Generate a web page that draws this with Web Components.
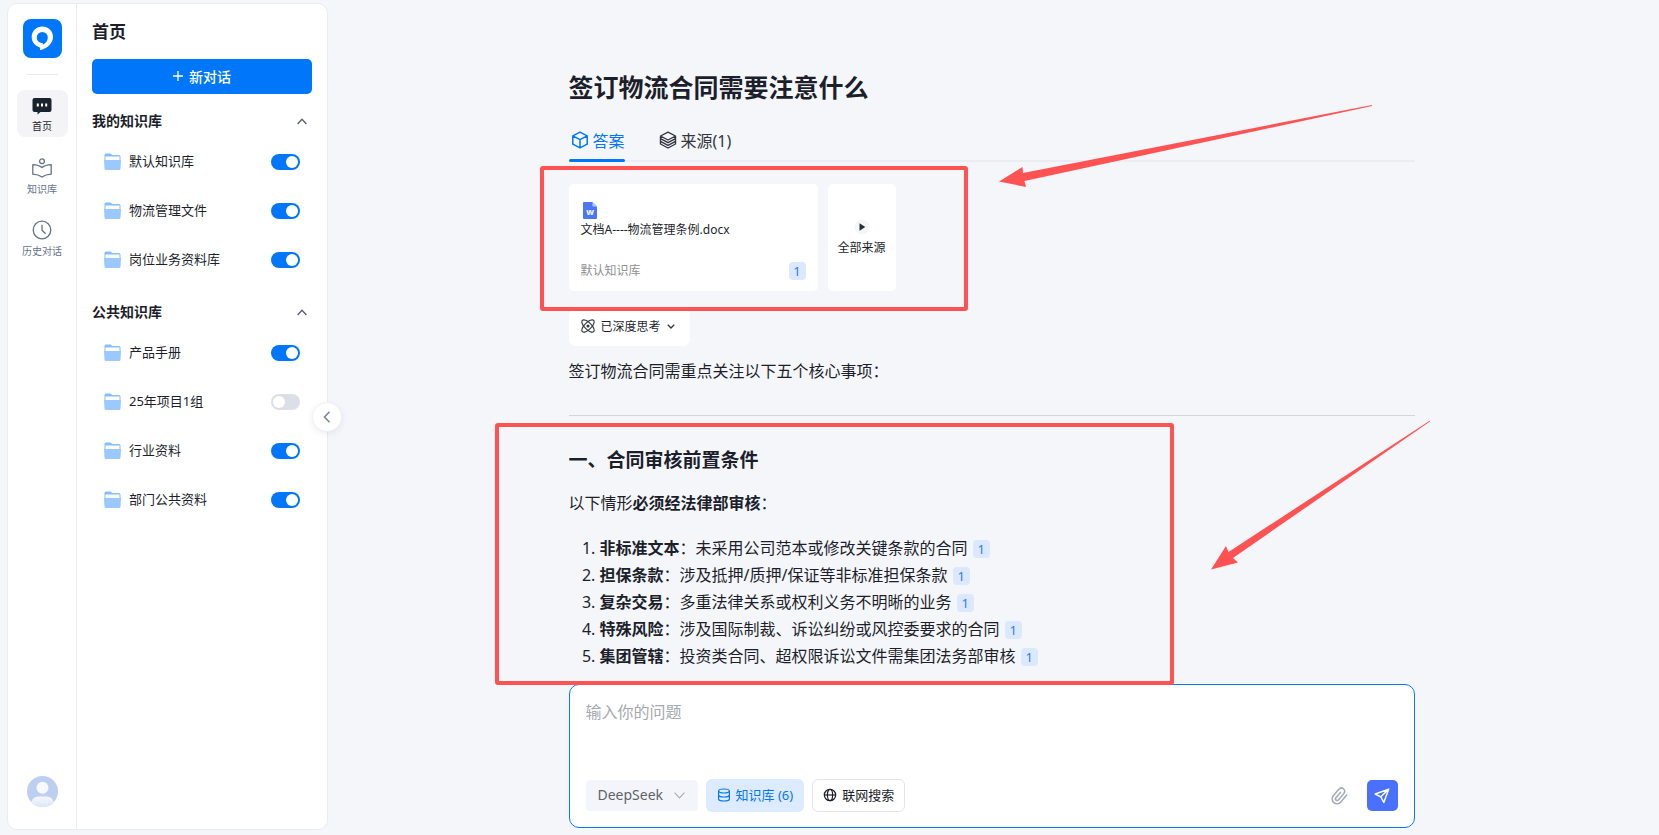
<!DOCTYPE html>
<html lang="zh-CN">
<head>
<meta charset="utf-8">
<meta name="viewport" content="width=device-width, initial-scale=1">
<title>首页</title>
<style>
    html,body{
        margin:0;
        height:100%;
    }
    body{
        --main:#0077fa;
        --ink:#1c1f2b;
        --muted:#64748b;
        --page:#f4f6fa;
        --chip:#dbe8ff;
        background:var(--page);
        color:var(--ink);
        font-family:"Noto Sans","Noto Sans CJK SC",sans-serif;
        font-size:16px;
    }
</style>
</head>
<body>
<app-shell>
    <side-rail slot="rail"></side-rail>
    <kb-sidebar slot="sidebar">
        <kb-group label="我的知识库">
            <kb-item label="默认知识库" on></kb-item>
            <kb-item label="物流管理文件" on></kb-item>
            <kb-item label="岗位业务资料库" on></kb-item>
        </kb-group>
        <kb-group label="公共知识库">
            <kb-item label="产品手册" on></kb-item>
            <kb-item label="25年项目1组"></kb-item>
            <kb-item label="行业资料" on></kb-item>
            <kb-item label="部门公共资料" on></kb-item>
        </kb-group>
    </kb-sidebar>
    <answer-view></answer-view>
    <chat-composer></chat-composer>
    <markup-layer></markup-layer>
</app-shell>

<script>
const base=`
    :host,*{box-sizing:border-box;}
    button,input,select,textarea{font:inherit;color:inherit;margin:0;}
    button{border:0;background:none;padding:0;cursor:pointer;}
    a{color:inherit;text-decoration:none;}
    svg{display:block;flex:none;}
`;

// registers an element whose shadow root is filled from getTemplate(self)
function define(name, getTemplate){
    customElements.define(name, class extends HTMLElement {
        constructor() {
            super();
            this.attachShadow({mode: 'open'});
        }

        connectedCallback(){
            this.shadowRoot.innerHTML=getTemplate(this);
        }
    });
}

define('app-shell', () => `
    <style>
        ${base}
        :host{display:flex;height:100vh;overflow:hidden;}
        .panel{
            position:relative;
            display:flex;
            flex:none;
            margin:3px 0 5px 7px;
            background:#fff;
            border:1px solid #ebecf0;
            border-radius:10px;
        }
        .collapse{
            position:absolute;
            right:-15px;
            top:50%;
            transform:translateY(-50%);
            width:30px;
            height:30px;
            border-radius:50%;
            background:#fff;
            border:1px solid #f0f1f5;
            box-shadow:0 2px 6px rgba(30,40,80,.08);
            display:grid;
            place-items:center;
        }
        main{
            flex:1;
            min-width:0;
            padding:0 24px 7px 20px;
            display:flex;
            justify-content:center;
        }
        .column{
            position:relative;
            width:100%;
            max-width:846px;
            display:flex;
            flex-direction:column;
        }
    </style>
    <div class="panel">
        <slot name="rail"></slot>
        <slot name="sidebar"></slot>
        <button class="collapse" aria-label="收起">
            <svg width="8" height="12" viewBox="0 0 8 12" fill="none" stroke="#7a869c" stroke-width="1.6"><path d="M6.5 .8 1.5 6l5 5.2"/></svg>
        </button>
    </div>
    <main><div class="column"><slot></slot></div></main>
`);

define('side-rail', () => `
    <style>
        ${base}
        :host{
            display:flex;
            flex-direction:column;
            align-items:center;
            width:69px;
            padding:15px 0 22px;
            border-right:1px solid #ebecf0;
        }
        .logo{border-radius:8px;}
        hr{width:31px;border:0;border-top:1px solid #e8e9ee;margin:16px 0 15px;}
        nav{display:flex;flex-direction:column;gap:15px;}
        .avatar{margin-top:auto;}
    </style>
    <a class="logo" href="#" aria-label="主页">
        <svg width="39" height="39" viewBox="0 0 39 39">
            <rect width="39" height="39" rx="8" fill="#0077fa"/>
            <path fill="#fff" fill-rule="evenodd" d="M19.3 7.6c6 0 10.7 4.600 10.700 10.400 0 5.900-5.200 11.700-13.200 13.200.6-1.200.5-2.200-.3-3C11.700 26.800 8.700 22.700 8.700 18c0-5.800 4.700-10.400 10.600-10.400zm0 5.300a5.500 5.500 0 0 0-5.500 5.500c0 3.300 2.600 5.500 5.300 5.500.7 0 1 .9.800 1.800 2.600-1.300 4.900-3.900 4.900-7.300a5.500 5.500 0 0 0-5.500-5.500z"/>
        </svg>
    </a>
    <hr>
    <nav>
        <rail-item label="首页" active>
            <svg width="20" height="18" viewBox="0 0 20 18"><path fill="#1c222d" d="M2.500 1h15A2 2 0 0 1 19.500 3v10a2 2 0 0 1-2 2H8.500L5.500 17.500V15h-3a2 2 0 0 1-2-2V3a2 2 0 0 1 2-2z"/><path fill="#fff" d="M4.800 6.500h2v3h-2zm4.200 0h2v3H9zm4.200 0h2v3h-2z"/></svg>
        </rail-item>
        <rail-item label="知识库">
            <svg width="20" height="20" viewBox="0 0 20 20" fill="none" stroke="#64748b" stroke-width="1.300" stroke-linejoin="round"><circle cx="10" cy="3.300" r="2.400"/><path d="M10 9.500C7.500 7.400 4.500 6.800.800 6.600v9.600c3.700.2 6.700 1 9.200 2.800 2.500-1.800 5.500-2.600 9.200-2.800V6.600c-3.700.2-6.700.8-9.200 2.900z"/></svg>
        </rail-item>
        <rail-item label="历史对话">
            <svg width="20" height="20" viewBox="0 0 20 20" fill="none" stroke="#64748b" stroke-width="1.300"><circle cx="10" cy="10" r="8.800"/><path d="M10 4.800V10.300l3.600 3.400"/></svg>
        </rail-item>
    </nav>
    <svg class="avatar" width="31" height="31" viewBox="0 0 31 31">
        <defs>
            <clipPath id="c"><circle cx="15.500" cy="15.500" r="15.500"/></clipPath>
            <linearGradient id="g" x1="0" y1="0" x2="0" y2="1"><stop offset="0" stop-color="#f4f7fe"/><stop offset="1" stop-color="#dde7f8"/></linearGradient>
        </defs>
        <g clip-path="url(#c)">
            <rect width="31" height="31" fill="#bccff0"/>
            <circle cx="15.500" cy="11.800" r="6" fill="#f6f9ff"/>
            <path fill="url(#g)" d="M3.500 31c0-7 3-10.500 8-10.500h8c5 0 8 3.500 8 10.500z"/>
        </g>
    </svg>
`);

define('rail-item', self => `
    <style>
        ${base}
        :host{display:block;}
        a{
            display:flex;
            flex-direction:column;
            align-items:center;
            justify-content:center;
            gap:4px;
            width:51px;
            height:47px;
            padding-top:2px;
            border-radius:8px;
            font-size:10px;
            line-height:14px;
            white-space:nowrap;
            color:${self.hasAttribute('active')?'var(--ink)':'var(--muted)'};
            background:${self.hasAttribute('active')?'#f4f4f7':'none'};
        }
    </style>
    <a href="#"><slot></slot><span>${self.getAttribute('label')}</span></a>
`);

define('kb-sidebar', () => `
    <style>
        ${base}
        :host{display:block;width:250px;padding:15px 15px 0;}
        h1{margin:0 0 14px;font-size:17px;line-height:26px;font-weight:600;}
        .new{
            display:flex;
            align-items:center;
            justify-content:center;
            gap:6px;
            width:100%;
            height:35px;
            padding-bottom:2px;
            border-radius:5px;
            background:var(--main);
            color:#fff;
            font-size:14px;
            font-weight:500;
        }
        .groups{display:flex;flex-direction:column;gap:16px;margin-top:15px;}
    </style>
    <h1>首页</h1>
    <button class="new">
        <svg width="10" height="10" viewBox="0 0 10 10" stroke="#fff" stroke-width="1.300"><path d="M5 0v10M0 5h10"/></svg>
        新对话
    </button>
    <div class="groups"><slot></slot></div>
`);

define('kb-group', self => `
    <style>
        ${base}
        :host{display:block;}
        .head{
            display:flex;
            align-items:center;
            justify-content:space-between;
            width:100%;
            padding-right:5px;
            font-size:14px;
            line-height:24px;
            font-weight:600;
            margin-bottom:4px;
        }
    </style>
    <button class="head" aria-expanded="true">
        ${self.getAttribute('label')}
        <svg width="10" height="7" viewBox="0 0 10 7" fill="none" stroke="#5b6270" stroke-width="1.400"><path d="M.600 6 5 1.300 9.400 6"/></svg>
    </button>
    <slot></slot>
`);

define('kb-item', self => `
    <style>
        ${base}
        :host{display:block;}
        label{
            display:flex;
            align-items:center;
            gap:8px;
            height:49px;
            padding:0 12px;
            font-size:13px;
        }
        span{padding-bottom:2px;}
        input{
            appearance:none;
            margin-left:auto;
            width:29px;
            height:16px;
            padding:2px;
            border-radius:8px;
            background:#dcdfe6;
            display:flex;
        }
        input::before{content:"";width:12px;height:12px;border-radius:50%;background:#fff;}
        input:checked{background:var(--main);justify-content:flex-end;}
    </style>
    <label>
        <svg width="17" height="17" viewBox="0 0 17 17">
            <path fill="#86bdfb" d="M.500 2A1.500 1.500 0 0 1 2 .500h4.500L8.300 2H15A1.500 1.500 0 0 1 16.500 3.500V9H.500z"/>
            <path fill="#fff" d="M1.500 3.500h14v5h-14z"/>
            <path fill="#99c9ff" d="M0 7h17l-.5 8.500A1.500 1.500 0 0 1 15 17H2A1.500 1.500 0 0 1 .500 15.500z"/>
        </svg>
        <span>${self.getAttribute('label')}</span>
        <input type="checkbox" role="switch" ${self.hasAttribute('on')?'checked':''}>
    </label>
`);

define('cite-chip', () => `
    <style>
        :host{
            display:inline-flex;
            align-items:center;
            justify-content:center;
            width:17px;
            height:18px;
            border-radius:4px;
            background:var(--chip);
            color:#1f80f5;
            font-size:13px;
            line-height:18px;
        }
    </style>
    <slot></slot>
`);

define('answer-view', () => `
    <style>
        ${base}
        :host{display:block;flex:1;min-height:0;overflow:hidden;padding-top:70px;}
        h2{margin:0;font-size:25px;line-height:34px;font-weight:700;}
        .tabs{
            display:flex;
            gap:32px;
            height:40px;
            margin-top:18px;
            border-bottom:2px solid #ebedf4;
        }
        .tabs button{
            position:relative;
            display:flex;
            align-items:center;
            gap:4px;
            padding:0 0 2px 2px;
            color:#33363f;
        }
        .tabs .active{color:var(--main);}
        .active::after{
            content:"";
            position:absolute;
            left:0;
            right:0;
            bottom:-2px;
            height:3px;
            border-radius:2px;
            background:var(--main);
        }
        .sources{display:flex;gap:10px;margin-top:22px;height:107px;font-size:12px;line-height:18px;}
        .doc{
            display:flex;
            flex-direction:column;
            width:249px;
            padding:18px 12px 11px;
            background:#fff;
            border-radius:5px;
        }
        .doc svg{margin-left:2px;}
        .doc .name{margin-top:2px;}
        .foot{display:flex;justify-content:space-between;margin-top:auto;color:#8f8f8f;}
        .all{
            display:flex;
            flex-direction:column;
            align-items:center;
            justify-content:center;
            gap:4px;
            width:68px;
            background:#fff;
            border-radius:5px;
        }
        .think{
            display:flex;
            align-items:center;
            gap:6px;
            height:38px;
            margin-top:17px;
            padding:0 15px 2px 12px;
            border-radius:7px;
            background:#fff;
            font-size:12px;
        }
        article{line-height:27px;}
        article p{margin:12px 0 0;}
        article hr{border:0;border-top:1px solid #d2d6dd;margin:30px 0 29px;}
        article h3{margin:0 0 15px;font-size:19px;line-height:30px;font-weight:700;}
        article h3 + p{margin:0;}
        strong{font-weight:600;}
        ol{margin:18px 0 0;padding-left:31px;}
        li cite-chip{margin-left:1px;vertical-align:baseline;}
    </style>
    <h2>签订物流合同需要注意什么</h2>
    <div class="tabs" role="tablist">
        <button class="active" role="tab" aria-selected="true">
            <svg width="18" height="18" viewBox="0 0 18 18" fill="none" stroke="currentColor" stroke-width="1.500" stroke-linejoin="round"><path d="M9 1.200 16.200 4.800v8.400L9 16.800 1.800 13.200V4.800zM1.800 4.800 9 8.600l7.200-3.800M9 8.600v8.200"/></svg>
            答案
        </button>
        <button role="tab" aria-selected="false">
            <svg width="18" height="18" viewBox="0 0 18 18" fill="none" stroke="currentColor" stroke-width="1.400" stroke-linejoin="round"><path d="M9 1.200 16.500 5 9 9 1.500 5zM1.500 5v8L9 17l7.500-4V5M1.500 7.700 9 11.700l7.500-4M1.500 10.400 9 14.400l7.500-4"/></svg>
            来源(1)
        </button>
    </div>
    <div class="sources">
        <div class="doc">
            <svg width="14" height="17" viewBox="0 0 14 17">
                <path fill="#4b76f8" d="M1 0h8.500L14 4.500V16a1 1 0 0 1-1 1H1a1 1 0 0 1-1-1V1a1 1 0 0 1 1-1z"/>
                <path fill="#b9cbff" d="M9.500 0 14 4.500H9.500z"/>
                <text x="7" y="13" fill="#fff" font-size="9" font-weight="700" text-anchor="middle">w</text>
            </svg>
            <span class="name">文档A----物流管理条例.docx</span>
            <span class="foot">默认知识库<cite-chip>1</cite-chip></span>
        </div>
        <button class="all">
            <svg width="16" height="16" viewBox="0 0 16 16"><circle cx="8" cy="8" r="7.500" fill="#f5f6f8"/><path fill="#2b2e36" d="M5.500 4.300v7.400L11.300 8z"/></svg>
            全部来源
        </button>
    </div>
    <button class="think">
        <svg width="14" height="14" viewBox="0 0 14 14" fill="none" stroke="#33363f" stroke-width="1.100"><ellipse cx="7" cy="7" rx="8" ry="3.400" transform="rotate(45 7 7)"/><ellipse cx="7" cy="7" rx="8" ry="3.400" transform="rotate(-45 7 7)"/><circle cx="7" cy="7" r="1" fill="#33363f"/></svg>
        已深度思考
        <svg width="8" height="5" viewBox="0 0 8 5" fill="none" stroke="#33363f" stroke-width="1.300"><path d="M.800.800 4 4 7.200.800"/></svg>
    </button>
    <article>
        <p>签订物流合同需重点关注以下五个核心事项：</p>
        <hr>
        <h3>一、合同审核前置条件</h3>
        <p>以下情形<strong>必须经法律部审核</strong>：</p>
        <ol>
            <li><strong>非标准文本</strong>：未采用公司范本或修改关键条款的合同 <cite-chip>1</cite-chip></li>
            <li><strong>担保条款</strong>：涉及抵押/质押/保证等非标准担保条款 <cite-chip>1</cite-chip></li>
            <li><strong>复杂交易</strong>：多重法律关系或权利义务不明晰的业务 <cite-chip>1</cite-chip></li>
            <li><strong>特殊风险</strong>：涉及国际制裁、诉讼纠纷或风控委要求的合同 <cite-chip>1</cite-chip></li>
            <li><strong>集团管辖</strong>：投资类合同、超权限诉讼文件需集团法务部审核 <cite-chip>1</cite-chip></li>
        </ol>
    </article>
`);

define('chat-composer', () => `
    <style>
        ${base}
        :host{
            display:block;
            flex:none;
            padding:14px 16px 15px;
            background:#fff;
            border:1px solid #0a7af5;
            border-radius:10px;
        }
        textarea{
            display:block;
            width:100%;
            height:72px;
            padding:0;
            border:0;
            outline:0;
            resize:none;
            background:none;
            line-height:27px;
        }
        textarea::placeholder{color:#a6a9b0;}
        .bar{display:flex;align-items:center;gap:8px;margin-top:8px;font-size:13px;}
        .model{position:relative;color:#606266;font-size:14px;}
        select{
            appearance:none;
            display:block;
            width:112px;
            height:31px;
            padding:0 12px 2px;
            border:0;
            border-radius:4px;
            background:#f4f5fa;
        }
        .model svg{position:absolute;right:13px;top:12px;pointer-events:none;}
        .bar button{display:flex;align-items:center;justify-content:center;gap:5px;height:33px;border-radius:6px;}
        .bar .kb{padding:0 11px 2px;background:#dcebff;color:var(--main);}
        .bar .web{padding:0 10px 2px;border:1px solid #e2e4ea;}
        .clip{margin-left:auto;margin-right:11px;}
        .bar .send{width:31px;height:31px;background:#4a70ff;border-radius:5px;}
    </style>
    <textarea placeholder="输入你的问题" aria-label="输入你的问题"></textarea>
    <div class="bar">
        <div class="model">
            <select aria-label="模型"><option>DeepSeek</option></select>
            <svg width="11" height="7" viewBox="0 0 11 7" fill="none" stroke="#a8abb2" stroke-width="1.100"><path d="M.600.700 5.500 5.900 10.400.700"/></svg>
        </div>
        <button class="kb">
            <svg width="14" height="14" viewBox="0 0 14 14" fill="none" stroke="currentColor" stroke-width="1.200"><ellipse cx="7" cy="3" rx="5.400" ry="2"/><path d="M1.600 3v8c0 1.100 2.400 2 5.400 2s5.400-.9 5.400-2V3M1.600 7c0 1.100 2.400 2 5.400 2s5.400-.9 5.400-2"/></svg>
            知识库 (6)
        </button>
        <button class="web">
            <svg width="14" height="14" viewBox="0 0 14 14" fill="none" stroke="currentColor" stroke-width="1.200"><circle cx="7" cy="7" r="5.700"/><ellipse cx="7" cy="7" rx="2.600" ry="5.700"/><path d="M1.300 7h11.400"/></svg>
            联网搜索
        </button>
        <button class="clip" aria-label="附件">
            <svg width="17" height="19" viewBox="0 0 17 19" fill="none" stroke="#a3abb8" stroke-width="1.500" stroke-linecap="round"><path d="m15.700 9-5.900 7c-1.800 2.100-4.800 2.400-6.900.700s-2.300-4.800-.6-6.900l5.500-6.500c1.200-1.400 3.200-1.700 4.600-.5s1.600 3.200.4 4.700l-5.400 6.400c-.6.700-1.600.8-2.300.2s-.8-1.600-.2-2.300l4.600-5.400"/></svg>
        </button>
        <button class="send" aria-label="发送">
            <svg width="16" height="16" viewBox="0 0 16 16" fill="none" stroke="#fff" stroke-width="1.500" stroke-linejoin="round"><path d="M14.700 1.300 1.200 6l5.600 2.800L9.800 14.500zM14.700 1.300 6.800 8.800"/></svg>
        </button>
    </div>
`);

// red review marks drawn freely over the answer column
define('markup-layer', () => `
    <style>
        :host{position:absolute;inset:0;z-index:2;pointer-events:none;}
        svg{display:block;width:100%;height:100%;overflow:visible;}
    </style>
    <svg fill="#ff5252" aria-hidden="true">
        <g fill="none" stroke="#ff5252" stroke-width="4">
            <rect x="-27" y="168" width="424" height="141" rx="1"/>
            <rect x="-72" y="425" width="675" height="258" rx="1"/>
        </g>
        <path d="M803 105 454 173 453.500 167 430 181.500 457 187 455.500 181 803 106z"/>
        <path d="M861 420.500 659.500 552 657 546 642 569.500 669 562.500 664 558 861 421.500z"/>
    </svg>
`);
</script>
</body>
</html>
